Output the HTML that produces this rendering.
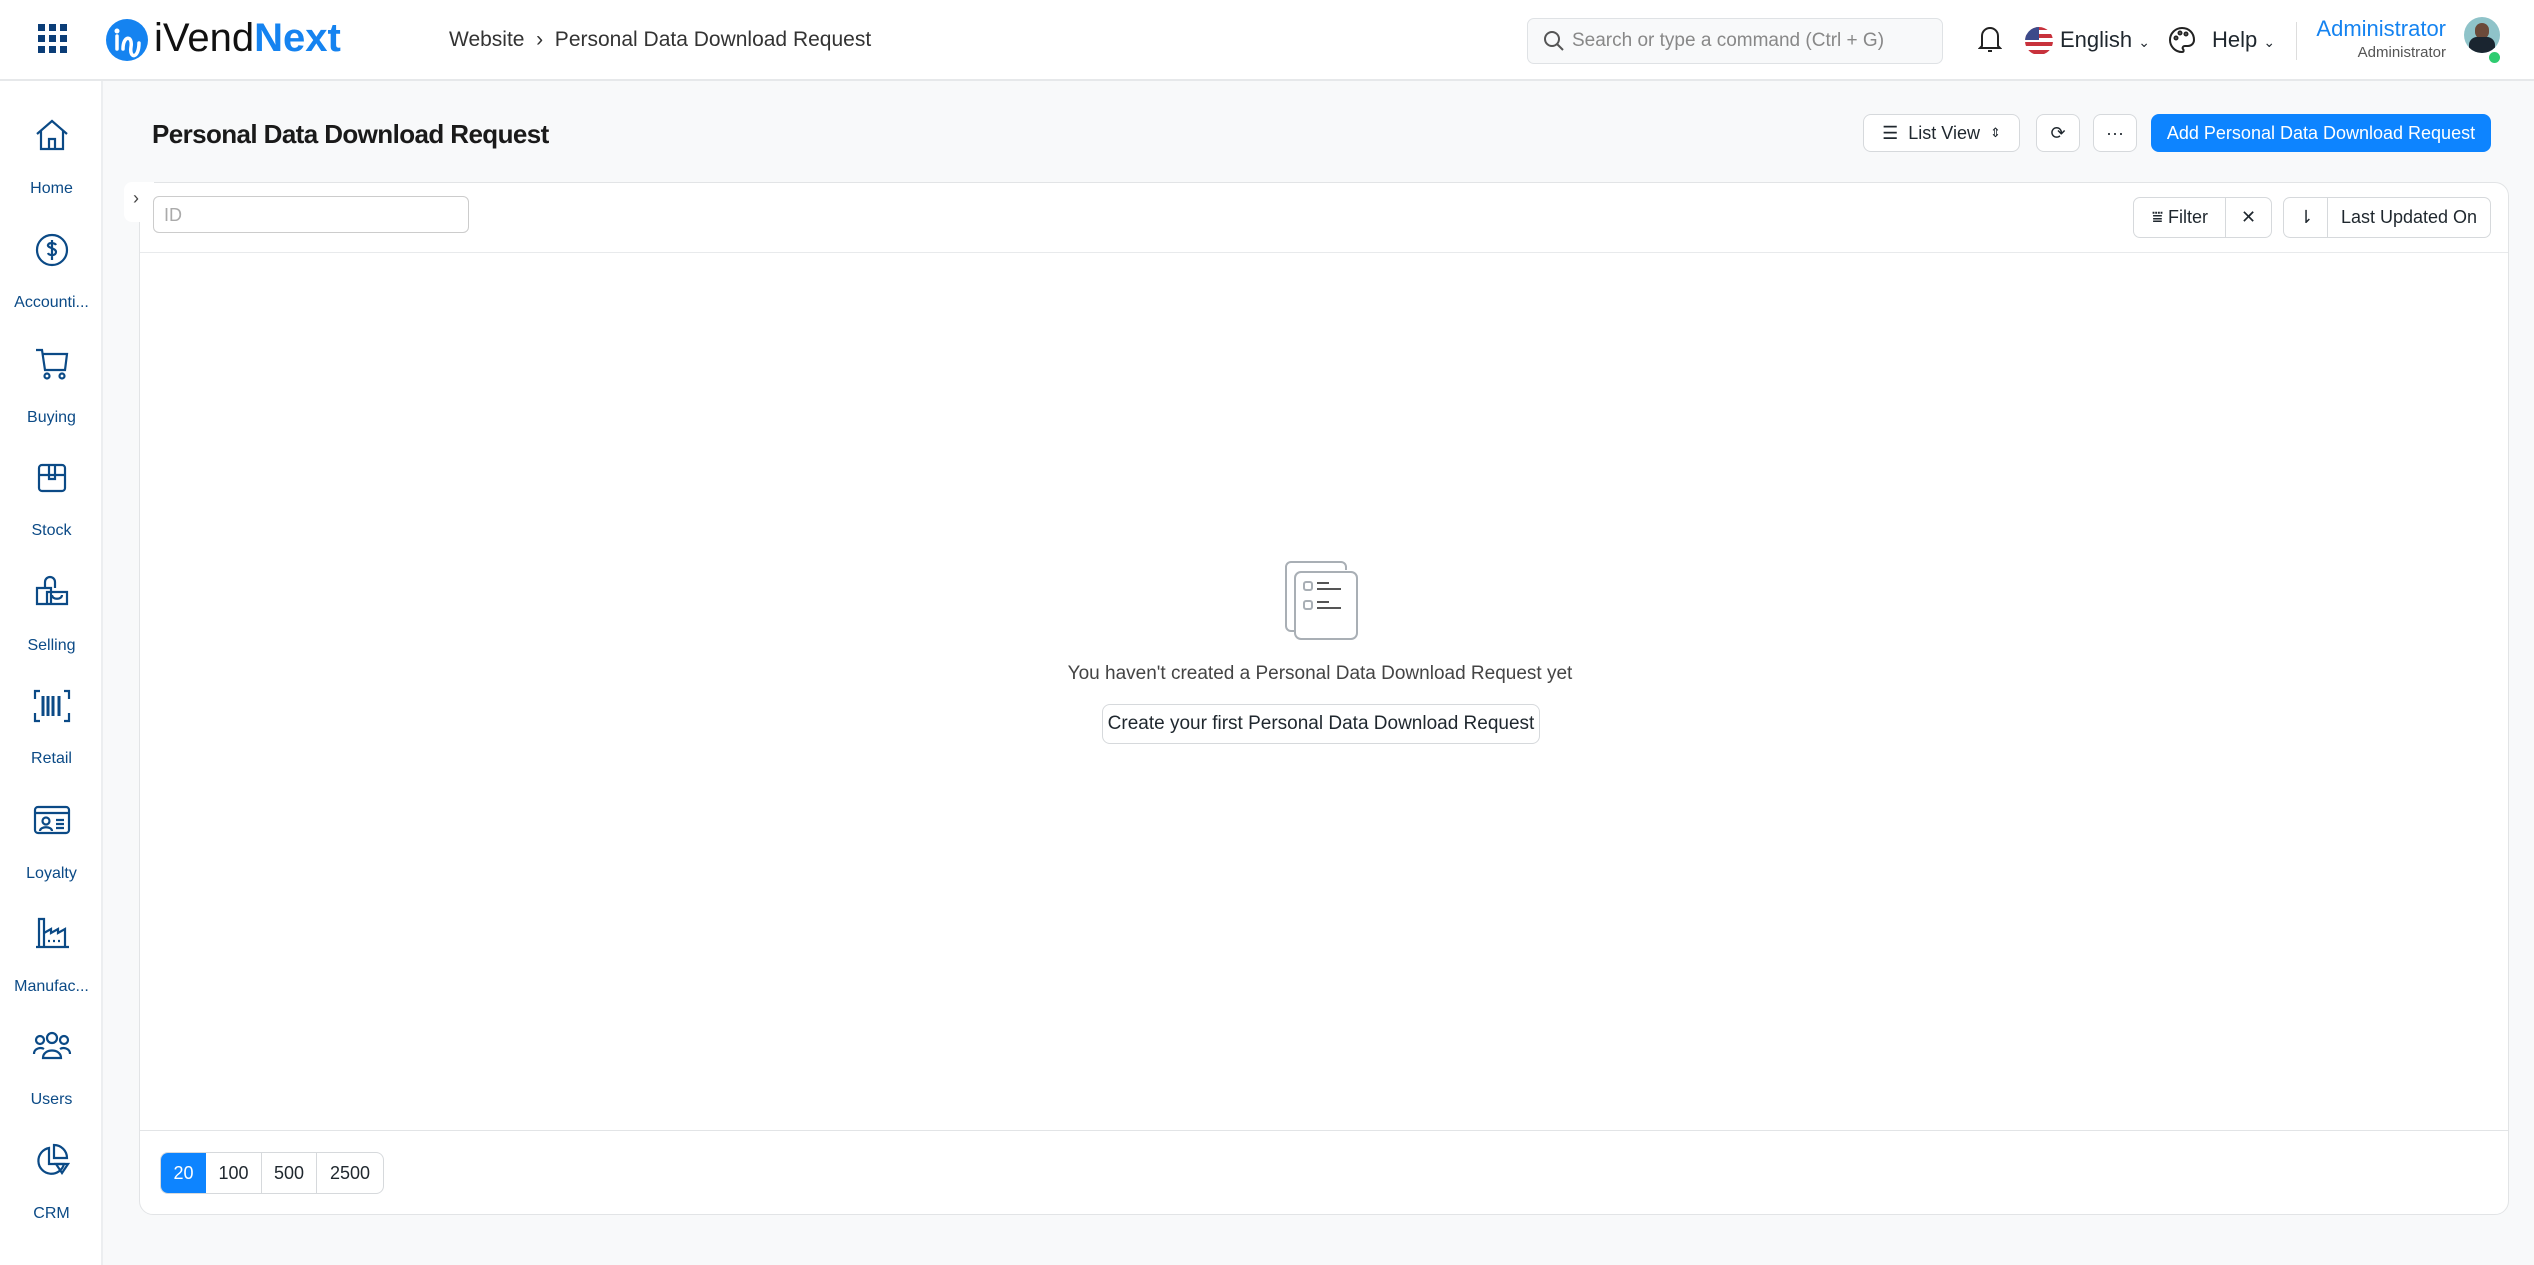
<!DOCTYPE html>
<html><head><meta charset="utf-8"><style>
*{box-sizing:border-box;margin:0;padding:0}
body{width:2534px;height:1265px;background:#f8f9fa;font-family:"Liberation Sans",sans-serif;color:#1f272e;position:relative;overflow:hidden}
.a{position:absolute}
.hdr{left:0;top:0;width:2534px;height:81px;background:#fff;border-bottom:2px solid #e6e8ea}
.side{left:0;top:81px;width:103px;height:1184px;background:#fff;border-right:2px solid #eceef0}
.si{position:absolute;left:0;width:103px;text-align:center;color:#0b4a86;font-size:16px}
.si svg{display:block;margin:0 auto}
.btn{position:absolute;background:#fff;border:1.5px solid #d6d9dc;border-radius:8px;font-size:18px;color:#1f272e;display:flex;align-items:center;justify-content:center}
.card{left:139px;top:182px;width:2370px;height:1033px;background:#fff;border:1.5px solid #e2e4e6;border-radius:14px}
</style></head><body>
<div class="a hdr"></div>
<svg class="a" style="left:38px;top:24px" width="30" height="30" viewBox="0 0 30 30" fill="#0b3d77"><rect x="0" y="0" width="7" height="7"/><rect x="11" y="0" width="7" height="7"/><rect x="22" y="0" width="7" height="7"/><rect x="0" y="11" width="7" height="7"/><rect x="11" y="11" width="7" height="7"/><rect x="22" y="11" width="7" height="7"/><rect x="0" y="22" width="7" height="7"/><rect x="11" y="22" width="7" height="7"/><rect x="22" y="22" width="7" height="7"/></svg>
<svg class="a" style="left:106px;top:19px" width="42" height="42" viewBox="0 0 42 42"><circle cx="21" cy="21" r="21" fill="#1583f0"/><path d="M11 30V17M17 30c0-14 10-14 8-2s8 12 8-4" stroke="#fff" stroke-width="3.5" fill="none" stroke-linecap="round"/><circle cx="11" cy="12" r="2.5" fill="#fff"/></svg>
<div class="a" style="left:154px;top:16px;font-size:40px;color:#111">iVend<b style="color:#1583f0">Next</b></div>
<div class="a" style="left:449px;top:28px;font-size:21px;color:#333">Website &nbsp;›&nbsp; Personal Data Download Request</div>
<div class="a" style="left:1527px;top:18px;width:416px;height:46px;background:#f8f9fa;border:1.5px solid #dfe2e5;border-radius:7px"></div>
<svg class="a" style="left:1543px;top:30px" width="22" height="22" viewBox="0 0 22 22" fill="none" stroke="#555" stroke-width="2"><circle cx="9" cy="9" r="7"/><path d="M14 14l6 6"/></svg>
<div class="a" style="left:1572px;top:30px;font-size:19px;color:#888">Search or type a command (Ctrl + G)</div>
<svg class="a" style="left:1978px;top:24px" width="24" height="30" viewBox="0 0 24 30" fill="none" stroke="#222" stroke-width="2"><path d="M4 22V12a8 8 0 0116 0v10l2 2H2z"/><path d="M10 27h4"/></svg>
<svg class="a" style="left:2024px;top:26px" width="30" height="30" viewBox="0 0 30 30"><clipPath id="c"><circle cx="15" cy="15" r="14"/></clipPath><g clip-path="url(#c)"><rect width="30" height="30" fill="#fff"/><g fill="#c8323c"><rect y="0" width="30" height="4"/><rect y="8" width="30" height="4"/><rect y="16" width="30" height="4"/><rect y="24" width="30" height="4"/></g><rect width="15" height="14" fill="#3c4a8a"/></g></svg>
<div class="a" style="left:2060px;top:27px;font-size:22px">English <span style="font-size:14px">⌄</span></div>
<svg class="a" style="left:2168px;top:26px" width="28" height="28" viewBox="0 0 28 28" fill="none" stroke="#222" stroke-width="2"><path d="M14 2a12 12 0 100 24c2 0 2-2 1-3s0-3 2-3h3a6 6 0 006-6C26 7 21 2 14 2z"/><circle cx="8" cy="12" r="1.5"/><circle cx="12" cy="7" r="1.5"/><circle cx="18" cy="8" r="1.5"/></svg>
<div class="a" style="left:2212px;top:27px;font-size:22px">Help <span style="font-size:14px">⌄</span></div>
<div class="a" style="left:2296px;top:22px;width:1px;height:38px;background:#ddd"></div>
<div class="a" style="left:2300px;top:16px;width:146px;text-align:right;font-size:22px;color:#1583f0">Administrator</div>
<div class="a" style="left:2300px;top:44px;width:146px;text-align:right;font-size:15px;color:#555">Administrator</div>
<div class="a" style="left:2464px;top:17px;width:36px;height:36px;border-radius:50%;background:#8fc3c9;overflow:hidden"><div style="margin:6px auto 0;width:14px;height:16px;border-radius:7px;background:#6b4a3a"></div><div style="margin:-2px auto 0;width:26px;height:16px;border-radius:8px 8px 0 0;background:#1a2530"></div></div>
<div class="a" style="left:2489px;top:52px;width:11px;height:11px;border-radius:50%;background:#2ecc71"></div>

<div class="a side"></div>
<div class="si" style="top:117px"><svg width="36" height="36" viewBox="0 0 36 36" fill="none" stroke="#0b4a86" stroke-width="2.2"><path d="M3 17L18 4l15 13M7 14v18h22V14M15 32v-10h6v10"/></svg></div>
<div class="si" style="top:180px">Home</div>
<div class="si" style="top:232px"><svg width="36" height="36" viewBox="0 0 36 36" fill="none" stroke="#0b4a86" stroke-width="2.2"><circle cx="18" cy="18" r="15"/><path d="M22 13c-1-2-7-3-8 0s8 3 8 7-7 4-8 1M18 8v20"/></svg></div>
<div class="si" style="top:294px">Accounti...</div>
<div class="si" style="top:346px"><svg width="36" height="36" viewBox="0 0 36 36" fill="none" stroke="#0b4a86" stroke-width="2.2"><path d="M2 4h6l3 20h20l2-16H9"/><circle cx="13" cy="30" r="2.5"/><circle cx="28" cy="30" r="2.5"/></svg></div>
<div class="si" style="top:409px">Buying</div>
<div class="si" style="top:460px"><svg width="36" height="36" viewBox="0 0 36 36" fill="none" stroke="#0b4a86" stroke-width="2.2"><rect x="5" y="5" width="26" height="26" rx="3"/><path d="M5 15h26M15 5v14h6V5"/></svg></div>
<div class="si" style="top:522px">Stock</div>
<div class="si" style="top:574px"><svg width="38" height="36" viewBox="0 0 38 36" fill="none" stroke="#0b4a86" stroke-width="2.2"><path d="M12 14V8a5 5 0 0110 0v6M4 14h14v16H4zM14 18h20v12H14zM19 21c0 5 10 5 10 0"/></svg></div>
<div class="si" style="top:637px">Selling</div>
<div class="si" style="top:688px"><svg width="40" height="36" viewBox="0 0 40 36" fill="none" stroke="#0b4a86" stroke-width="2.2"><path d="M8 3H3v8M32 3h5v8M8 33H3v-8M32 33h5v-8"/><path d="M11 8v20M16 8v20M21 8v20M27 8v20" stroke-width="3"/></svg></div>
<div class="si" style="top:750px">Retail</div>
<div class="si" style="top:802px"><svg width="40" height="36" viewBox="0 0 40 36" fill="none" stroke="#0b4a86" stroke-width="2.2"><rect x="3" y="5" width="34" height="26" rx="3"/><path d="M3 11h34"/><circle cx="14" cy="19" r="3.5"/><path d="M8 29c0-5 12-5 12 0M24 18h8M24 22h8M24 26h8"/></svg></div>
<div class="si" style="top:865px">Loyalty</div>
<div class="si" style="top:915px"><svg width="38" height="36" viewBox="0 0 38 36" fill="none" stroke="#0b4a86" stroke-width="2.2"><path d="M3 32h33M6 32V4h5v28M11 18l7-4v4l7-4v4l7-4v18M15 26h2M20 26h2M25 26h2"/></svg></div>
<div class="si" style="top:978px">Manufac...</div>
<div class="si" style="top:1028px"><svg width="42" height="36" viewBox="0 0 42 36" fill="none" stroke="#0b4a86" stroke-width="2.2"><circle cx="21" cy="10" r="5"/><circle cx="9" cy="12" r="4"/><circle cx="33" cy="12" r="4"/><path d="M12 30c0-10 18-10 18 0zM3 26c0-6 7-7 10-5M39 26c0-6-7-7-10-5"/></svg></div>
<div class="si" style="top:1091px">Users</div>
<div class="si" style="top:1142px"><svg width="36" height="36" viewBox="0 0 36 36" fill="none" stroke="#0b4a86" stroke-width="2.2"><path d="M15 6a13 13 0 1015 16H15z"/><path d="M20 3v13h13A13 13 0 0020 3zM22 22h12l-6 9z"/></svg></div>
<div class="si" style="top:1205px">CRM</div>

<div class="a" style="left:152px;top:119px;font-size:26px;letter-spacing:-0.6px;font-weight:bold;color:#1a1a1a">Personal Data Download Request</div>
<div class="btn" style="left:1863px;top:114px;width:157px;height:38px">☰&nbsp; List View &nbsp;<span style="font-size:13px">⇕</span></div>
<div class="btn" style="left:2036px;top:114px;width:44px;height:38px">⟳</div>
<div class="btn" style="left:2093px;top:114px;width:44px;height:38px">···</div>
<div class="btn" style="left:2151px;top:114px;width:340px;height:38px;background:#0d84ff;border-color:#0d84ff;color:#fff">Add Personal Data Download Request</div>

<div class="a card"></div>
<div class="a" style="left:124px;top:182px;width:30px;height:40px;background:#fff;border-radius:8px 0 0 8px;font-size:18px;padding:6px 0 0 9px;color:#444">›</div>
<div class="a" style="left:153px;top:196px;width:316px;height:37px;border:1.5px solid #ccc;border-radius:6px;font-size:18px;color:#aaa;padding:8px 10px">ID</div>
<div class="btn" style="left:2133px;top:197px;width:94px;height:41px;border-radius:7px 0 0 7px">⩸ Filter</div>
<div class="btn" style="left:2225px;top:197px;width:47px;height:41px;border-radius:0 7px 7px 0">✕</div>
<div class="btn" style="left:2283px;top:197px;width:46px;height:41px;border-radius:7px 0 0 7px">⇂</div>
<div class="btn" style="left:2327px;top:197px;width:164px;height:41px;border-radius:0 7px 7px 0">Last Updated On</div>
<div class="a" style="left:140px;top:252px;width:2368px;height:1px;background:#e8eaec"></div>

<svg class="a" style="left:1282px;top:559px" width="78" height="82" viewBox="0 0 78 82" fill="none" stroke="#a9afb5" stroke-width="2"><path d="M12 72h-3a5 5 0 01-5-5V8a5 5 0 015-5h50a5 5 0 015 5v3"/><rect x="13" y="13" width="62" height="67" rx="6"/><rect x="22" y="23" width="8" height="8" rx="2"/><rect x="22" y="42" width="8" height="8" rx="2"/><path d="M35 24h12M35 30h24M35 43h12M35 49h24" stroke="#555"/></svg>
<div class="a" style="left:1060px;top:663px;width:520px;text-align:center;font-size:19px;color:#444">You haven't created a Personal Data Download Request yet</div>
<div class="btn" style="left:1102px;top:704px;width:438px;height:40px;font-size:19px">Create your first Personal Data Download Request</div>

<div class="a" style="left:140px;top:1130px;width:2368px;height:1px;background:#e2e4e6"></div>
<div class="a" style="left:160px;top:1152px;width:224px;height:42px;border:1.5px solid #d6d9dc;border-radius:8px;display:flex;font-size:18px;overflow:hidden">
<div style="width:45px;background:#0d84ff;color:#fff;display:flex;align-items:center;justify-content:center">20</div>
<div style="width:56px;border-right:1.5px solid #d6d9dc;display:flex;align-items:center;justify-content:center">100</div>
<div style="width:55px;border-right:1.5px solid #d6d9dc;display:flex;align-items:center;justify-content:center">500</div>
<div style="flex:1;display:flex;align-items:center;justify-content:center">2500</div>
</div>
</body></html>
